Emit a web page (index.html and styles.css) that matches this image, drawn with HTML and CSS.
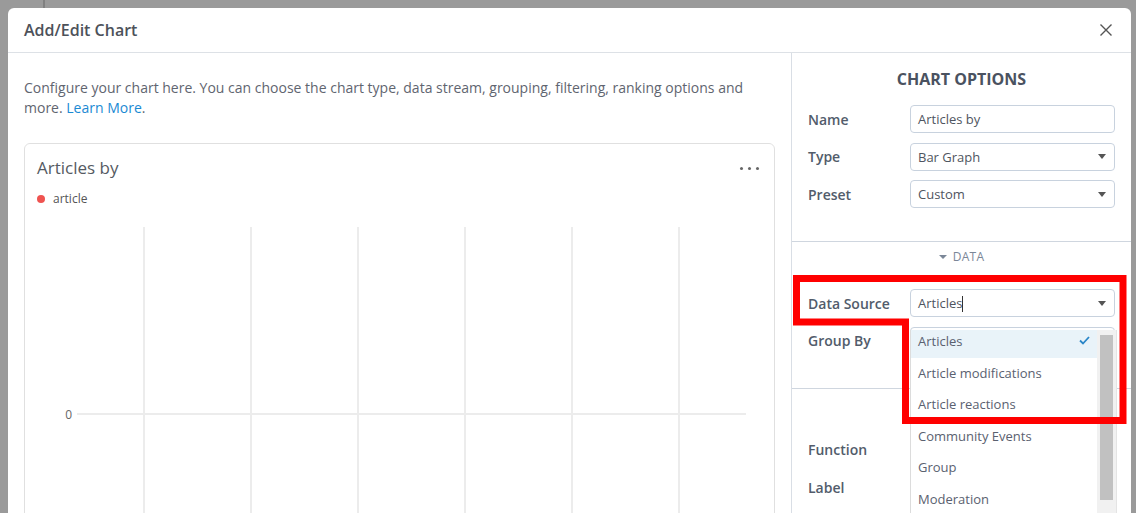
FILE: index.html
```html
<!DOCTYPE html>
<html>
<head>
  <link rel="stylesheet" href="styles.css">
</head>
<body>
  <div class="modal">
    <div class="modal-header">
      <h3 class="modal-title">Add/Edit Chart</h3>
      <span class="close-btn">
        <svg width="12" height="12" viewBox="0 0 12 12"><path d="M0.5 0.5 L11.5 11.5 M11.5 0.5 L0.5 11.5" stroke="#555" stroke-width="1.4" fill="none"/></svg>
      </span>
    </div>

    <div class="modal-body">
      <div class="preview">
        <p class="intro">Configure your chart here. You can choose the chart type, data stream, grouping, filtering, ranking options and more. <a href="#">Learn More</a>.</p>

        <div class="chart-card">
          <div class="chart-head">
            <div class="chart-title">Articles by</div>
            <div class="chart-menu"><span></span><span></span><span></span></div>
          </div>
          <div class="legend"><span class="legend-dot"></span>article</div>
          <svg class="plot" width="749" height="320" viewBox="0 0 749 320">
            <g stroke="#ececec" stroke-width="2">
              <line x1="119" y1="0" x2="119" y2="320"/>
              <line x1="226" y1="0" x2="226" y2="320"/>
              <line x1="333" y1="0" x2="333" y2="320"/>
              <line x1="440" y1="0" x2="440" y2="320"/>
              <line x1="547" y1="0" x2="547" y2="320"/>
              <line x1="654" y1="0" x2="654" y2="320"/>
              <line x1="52" y1="187" x2="721" y2="187"/>
            </g>
            <text x="47" y="191.5" text-anchor="end" class="axis-label">0</text>
          </svg>
        </div>
      </div>

      <div class="options">
        <div class="options-section">
          <div class="options-title">CHART OPTIONS</div>
          <div class="form-row">
            <div class="form-label">Name</div>
            <div class="field">Articles by</div>
          </div>
          <div class="form-row">
            <div class="form-label">Type</div>
            <div class="field">Bar Graph<span class="caret"></span></div>
          </div>
          <div class="form-row">
            <div class="form-label">Preset</div>
            <div class="field">Custom<span class="caret"></span></div>
          </div>
        </div>

        <div class="options-section">
          <div class="section-toggle"><span class="toggle-caret"></span>DATA</div>
          <div class="form-row">
            <div class="form-label">Data Source</div>
            <div class="field select open">
              <span>Articles<span class="text-cursor"></span></span>
              <span class="caret"></span>
              <div class="dropdown">
                <div class="dropdown-list">
                  <div class="dropdown-item selected">Articles
                    <svg class="check" width="11" height="9" viewBox="0 0 11 9"><path d="M1 4.5 L4 7.5 L10 1" stroke="#2a86c8" stroke-width="1.8" fill="none"/></svg>
                  </div>
                  <div class="dropdown-item">Article modifications</div>
                  <div class="dropdown-item">Article reactions</div>
                  <div class="dropdown-item">Community Events</div>
                  <div class="dropdown-item">Group</div>
                  <div class="dropdown-item">Moderation</div>
                </div>
                <div class="scroll-track"><div class="scroll-thumb"></div></div>
              </div>
            </div>
          </div>
          <div class="form-row">
            <div class="form-label">Group By</div>
            <div class="field"><span class="caret"></span></div>
          </div>
        </div>

        <div class="options-section">
          <!-- section header sits under the open dropdown -->
          <div class="section-toggle"></div>
          <div class="form-row">
            <div class="form-label">Function</div>
            <div class="field"><span class="caret"></span></div>
          </div>
          <div class="form-row">
            <div class="form-label">Label</div>
            <div class="field"></div>
          </div>
        </div>
      </div>
    </div>
  </div>

  <!-- highlight drawn over the screenshot -->
  <svg class="annotation" width="1136" height="513" viewBox="0 0 1136 513">
    <path d="M796.5 278.5 H1123 V420.5 H905.5 V322 H796.5 Z" stroke="#ff0000" stroke-width="7" fill="none"/>
  </svg>
</body>
</html>
```

FILE: styles.css
```css
body {
  margin: 0;
  padding: 8px 5px 0 8px;
  height: 513px;
  box-sizing: border-box;
  overflow: hidden;
  position: relative;
  font-family: "Open Sans", "Liberation Sans", sans-serif;
  background-color: #9a9a9a;
  background-image: linear-gradient(to right, transparent 43px, #808080 43px, #808080 45px, transparent 45px);
}
.modal {
  background: #fff;
  border-radius: 6px 6px 0 0;
  height: 560px;
  overflow: hidden;
}
.modal-header {
  height: 44px;
  display: flex;
  align-items: center;
  justify-content: space-between;
  padding: 0 19px 0 16px;
  border-bottom: 1px solid #dde1e6;
}
.modal-title {
  margin: 0;
  font-size: 16px;
  font-weight: 600;
  color: #4d525a;
}
.close-btn {
  display: flex;
}
.modal-body {
  display: flex;
}
/* Preview column */
.preview {
  width: 783px;
  padding: 25px 16px 0;
  box-sizing: border-box;
}
.intro {
  margin: 0 0 25px;
  font-size: 14px;
  line-height: 20px;
  color: #5f6570;
}
.intro a {
  color: #1b8ad3;
  text-decoration: none;
}
.chart-card {
  border: 1px solid #e0e0e0;
  border-radius: 6px;
  padding: 12px 15px 0 12px;
}
.chart-head {
  display: flex;
  align-items: center;
  justify-content: space-between;
}
.chart-title {
  font-size: 17px;
  line-height: 24px;
  color: #555a62;
}
.chart-menu {
  display: flex;
  gap: 5px;
}
.chart-menu span {
  width: 3px;
  height: 3px;
  border-radius: 50%;
  background: #666;
}
.legend {
  display: flex;
  align-items: center;
  gap: 8px;
  margin-top: 11px;
  font-size: 12px;
  line-height: 16px;
  color: #555;
}
.legend-dot {
  width: 8px;
  height: 8px;
  border-radius: 50%;
  background: #ef5350;
}
.plot {
  display: block;
  margin: 20px -15px 0 -12px;
}
.axis-label {
  font-family: "Open Sans", sans-serif;
  font-size: 12px;
  fill: #666;
}
/* Options column */
.options {
  flex: 1;
  border-left: 1px solid #d9dee5;
}
.options-section {
  padding: 15px 16px 33px;
  border-bottom: 1px solid #cfd6df;
}
.options-section + .options-section {
  padding-top: 7px;
}
.options-title {
  text-align: center;
  font-size: 16px;
  line-height: 22px;
  font-weight: 700;
  color: #4a5260;
  margin-bottom: 15px;
}
.section-toggle {
  display: flex;
  align-items: center;
  justify-content: center;
  gap: 6px;
  height: 16px;
  font-size: 12px;
  line-height: 16px;
  color: #7b8798;
  letter-spacing: 0.3px;
  margin-bottom: 24px;
}
.toggle-caret {
  border-left: 4px solid transparent;
  border-right: 4px solid transparent;
  border-top: 4.5px solid #7b8798;
}
.form-row {
  display: flex;
  align-items: center;
  height: 28px;
  margin-bottom: 9.5px;
}
.form-row:last-child {
  margin-bottom: 0;
}
.form-label {
  width: 102px;
  font-size: 14px;
  font-weight: 600;
  color: #525c6b;
}
.field {
  flex: 1;
  height: 28px;
  box-sizing: border-box;
  border: 1px solid #c8d2de;
  border-radius: 4px;
  padding: 0 8px 0 7px;
  display: flex;
  align-items: center;
  justify-content: space-between;
  font-size: 13px;
  color: #4f5560;
}
.caret {
  border-left: 4.5px solid transparent;
  border-right: 4.5px solid transparent;
  border-top: 5px solid #555;
}
.select {
  position: relative;
}
.text-cursor {
  display: inline-block;
  width: 1px;
  height: 16px;
  background: #333;
  vertical-align: middle;
}
.dropdown {
  position: absolute;
  top: 40px;
  left: -1px;
  width: 207px;
  height: 200px;
  display: flex;
  background: #fff;
  border-left: 1px solid #dcdcdc;
  border-right: 1px solid #e4e4e4;
  box-sizing: border-box;
  z-index: 2;
}
.dropdown-list {
  flex: 1;
}
.dropdown-item {
  height: 28px;
  line-height: 22px;
  margin-bottom: 3.6px;
  padding: 0 7px;
  display: flex;
  justify-content: space-between;
  font-size: 13px;
  color: #5a6170;
}
.dropdown-item.selected {
  background: #e9f3f9;
}
.check {
  margin-top: 6px;
}
.scroll-track {
  width: 19px;
  padding: 5px 3px;
  box-sizing: border-box;
  background: #f1f1f1;
}
.scroll-thumb {
  height: 165px;
  background: #c1c1c1;
}
.annotation {
  position: absolute;
  top: 0;
  left: 0;
  z-index: 5;
  pointer-events: none;
}
```
